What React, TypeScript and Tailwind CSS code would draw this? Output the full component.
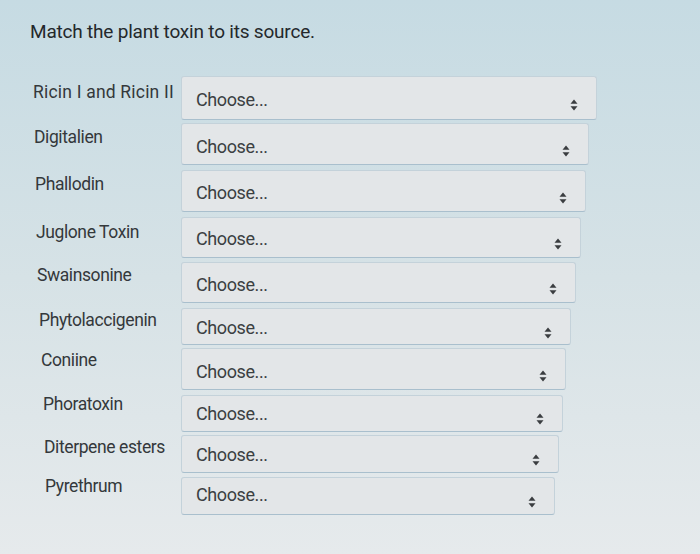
// Per-row offsets: the photo of the screen is slightly skewed, so each row
// gets its own pitch, box size and text placement.
const rows = [
  { label: 'Ricin I and Ricin II', h: 'h-[47px]', lab: 'pl-[33px] mt-[5px] tracking-[0.2px]', sel: 'h-[44px] w-[416px]', txt: 'pt-[12px]', ic: 'mt-[22px]' },
  { label: 'Digitalien', h: 'h-[47px]', lab: 'pl-[34px] mt-[3px]', sel: 'h-[42px] w-[408px]', txt: 'pt-[12px]', ic: 'mt-[21px]' },
  { label: 'Phallodin', h: 'h-[47px]', lab: 'pl-[35px] mt-[3px]', sel: 'h-[42px] w-[405px]', txt: 'pt-[11px]', ic: 'mt-[21px]' },
  { label: 'Juglone Toxin', h: 'h-[45px]', lab: 'pl-[36px] mt-[4px]', sel: 'h-[41px] w-[400px]', txt: 'pt-[10px]', ic: 'mt-[20px]' },
  { label: 'Swainsonine', h: 'h-[46px]', lab: 'pl-[37px] mt-[2px]', sel: 'h-[41px] w-[395px]', txt: 'pt-[11px]', ic: 'mt-[20px]' },
  { label: 'Phytolaccigenin', h: 'h-[40px]', lab: 'pl-[39px] mt-[1px]', sel: 'h-[37px] w-[390px]', txt: 'pt-[8px]', ic: 'mt-[18px]' },
  { label: 'Coniine', h: 'h-[47px]', lab: 'pl-[41px] mt-[1px]', sel: 'h-[42px] w-[385px]', txt: 'pt-[12px]', ic: 'mt-[21px]' },
  { label: 'Phoratoxin', h: 'h-[40px]', lab: 'pl-[43px] mt-[-2px]', sel: 'h-[37px] w-[382px]', txt: 'pt-[7px]', ic: 'mt-[17px]' },
  { label: 'Diterpene esters', h: 'h-[42px]', lab: 'pl-[44px] mt-[1px]', sel: 'h-[38px] w-[378px]', txt: 'pt-[8px]', ic: 'mt-[18px]' },
  { label: 'Pyrethrum', h: 'h-[40px]', lab: 'pl-[45px] mt-[-2px]', sel: 'h-[38px] w-[374px]', txt: 'pt-[6px]', ic: 'mt-[18px]' },
];

function UpDown({ className }: { className: string }) {
  return (
    <svg width="8" height="12" viewBox="0 0 8 12" className={`shrink-0 ${className}`}>
      <path d="M4 0.5 L7.5 4.8 H0.5 Z" fill="#3a3d40" />
      <path d="M4 11.5 L7.5 7.2 H0.5 Z" fill="#3a3d40" />
    </svg>
  );
}

export default function App() {
  return (
    <div
      className="w-[700px] h-[554px] overflow-hidden bg-linear-to-b from-[#c6dbe3] via-[#d6e2e6] to-[#e6eaec] text-[#2f3336]"
      style={{ fontFamily: 'Roboto, "Liberation Sans", sans-serif' }}
    >
      <h1 className="pl-[30px] pt-[20px] text-[19px] leading-[24px] tracking-[-0.2px] text-[#24282b]">
        Match the plant toxin to its source.
      </h1>

      <div className="mt-[32px] flex flex-col">
        {rows.map((r) => (
          <div key={r.label} className={`flex items-start ${r.h}`}>
            <div className={`w-[181px] shrink-0 text-[17.5px] leading-[22px] tracking-[-0.4px] text-[#34383b] ${r.lab}`}>
              {r.label}
            </div>
            <div
              className={`flex shrink-0 items-start justify-between rounded-[3px] border border-[#c4d2da] border-b-[#a9bfcd] bg-[#e3e6e8] pl-[14px] pr-[18px] ${r.sel}`}
            >
              <span className={`text-[18px] leading-[22px] tracking-[-0.4px] text-[#3b3f42] ${r.txt}`}>Choose...</span>
              <UpDown className={r.ic} />
            </div>
          </div>
        ))}
      </div>
    </div>
  );
}
